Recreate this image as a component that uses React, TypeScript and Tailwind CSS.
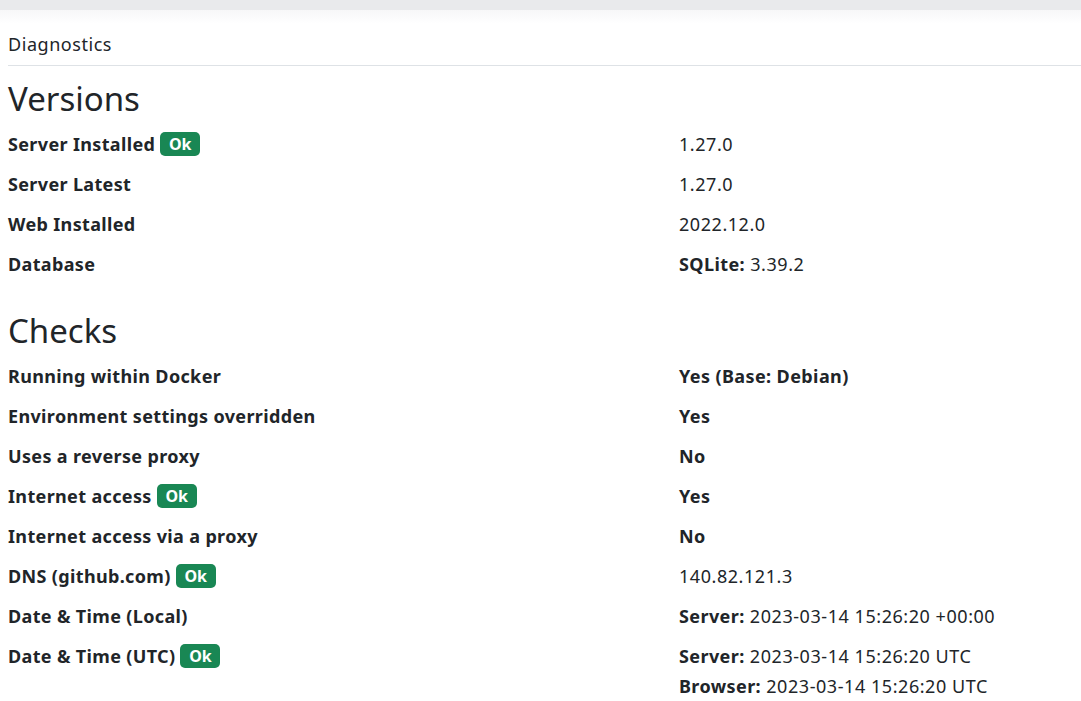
import React from "react";

type Row = {
  label: string;
  ok?: boolean;
  value: React.ReactNode;
};

function Badge() {
  return (
    <span className="ml-[5px] inline-flex h-[24px] w-[40px] items-center justify-center rounded-[5px] bg-[#198754] text-[16px] font-bold leading-none tracking-normal text-white">
      Ok
    </span>
  );
}

function B({ children }: { children: React.ReactNode }) {
  return <span className="font-bold tracking-[0.4px]">{children}</span>;
}

const versions: Row[] = [
  { label: "Server Installed", ok: true, value: "1.27.0" },
  { label: "Server Latest", value: "1.27.0" },
  { label: "Web Installed", value: "2022.12.0" },
  {
    label: "Database",
    value: (
      <>
        <B>SQLite:</B> 3.39.2
      </>
    ),
  },
];

const checks: Row[] = [
  { label: "Running within Docker", value: <B>Yes (Base: Debian)</B> },
  { label: "Environment settings overridden", value: <B>Yes</B> },
  { label: "Uses a reverse proxy", value: <B>No</B> },
  { label: "Internet access", ok: true, value: <B>Yes</B> },
  { label: "Internet access via a proxy", value: <B>No</B> },
  { label: "DNS (github.com)", ok: true, value: "140.82.121.3" },
  {
    label: "Date & Time (Local)",
    value: (
      <>
        <B>Server:</B> 2023-03-14 15:26:20 +00:00
      </>
    ),
  },
];

function RowList({ rows }: { rows: Row[] }) {
  return (
    <div>
      {rows.map((r) => (
        <div key={r.label} className="flex h-[40px] items-center">
          <div className="flex w-[671px] items-center font-bold tracking-[0.35px]">
            {r.label}
            {r.ok && <Badge />}
          </div>
          <div>{r.value}</div>
        </div>
      ))}
    </div>
  );
}

export default function App() {
  return (
    <div className="min-h-[701px] bg-white text-[18px] tracking-[0.55px] text-[#212529] [font-family:'Noto_Sans',sans-serif]">
      {/* top nav remnant */}
      <div className="h-[10px] bg-[#e9eaec]" />
      <div className="h-[14px] bg-gradient-to-b from-[#f7f7f8] to-white" />

      <div className="pl-2">
        <div className="flex h-[42px] items-center border-b border-[#dee2e6] pb-[1px]">
          Diagnostics
        </div>

        <h3 className="mt-[13px] mb-[5px] text-[33px] leading-[40px] tracking-normal">Versions</h3>
        <RowList rows={versions} />

        <h3 className="mt-[27px] mb-[5px] text-[33px] leading-[40px] tracking-normal">Checks</h3>
        <RowList rows={checks} />

        <div className="flex">
          <div className="flex h-[40px] w-[671px] items-center font-bold tracking-[0.35px]">
            Date & Time (UTC)
            <Badge />
          </div>
          <div className="pt-[5px] leading-[30px]">
            <div>
              <B>Server:</B> 2023-03-14 15:26:20 UTC
            </div>
            <div>
              <B>Browser:</B> 2023-03-14 15:26:20 UTC
            </div>
          </div>
        </div>
      </div>
    </div>
  );
}
